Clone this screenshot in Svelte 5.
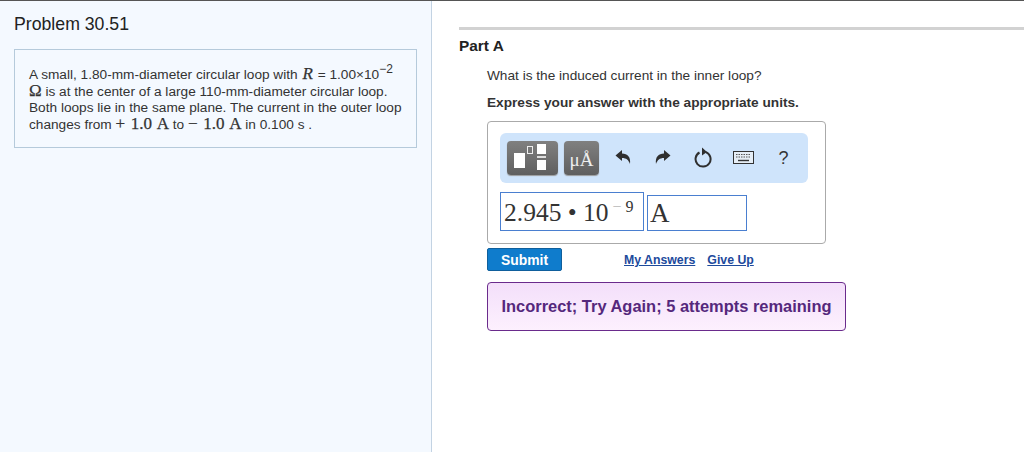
<script>
const tools = ["undo", "redo", "reset", "keyboard", "help"];
</script>

<main>
    <section class="left">
        <h1>Problem 30.51</h1>
        <div class="intro">
            A small, 1.80-mm-diameter circular loop with <i class="m r">R</i> = 1.00×10<sup>−2</sup><br />
            <span class="m">Ω</span> is at the center of a large 110-mm-diameter circular loop.<br />
            Both loops lie in the same plane. The current in the outer loop<br />
            changes from <span class="m">+ 1.0 A</span> to <span class="m">− 1.0 A</span> in 0.100 s .
        </div>
    </section>

    <section class="right">
        <hr />
        <h2>Part A</h2>
        <div class="part">
            <p class="question">What is the induced current in the inner loop?</p>
            <p class="express">Express your answer with the appropriate units.</p>

            <div class="answer">
                <div class="toolbar">
                    <div class="tpl frac">
                        <svg width="51" height="34" viewBox="0 0 51 34">
                            <rect x="7" y="12" width="11" height="15" fill="#fff" />
                            <rect x="20.5" y="5.5" width="5" height="7" fill="none" stroke="#eee" />
                            <rect x="30" y="3" width="9" height="10" fill="#fff" />
                            <rect x="30" y="15" width="9" height="2" fill="#ddd" />
                            <rect x="30" y="19" width="9" height="10" fill="#fff" />
                        </svg>
                    </div>
                    <div class="tpl units">μÅ</div>
                    <div class="icons">
                        {#each tools as t}
                            <span class="tool">
                                {#if t === "undo"}
                                    <svg width="16" height="16" viewBox="0 0 16 16"><path d="M0.5 6.5 L7 1 V4.5 C12.5 4.5 16 8 15 15 C13.5 11 11.5 9 7 9 V12 Z" fill="#2f2f2f" /></svg>
                                {:else if t === "redo"}
                                    <svg width="16" height="16" viewBox="0 0 16 16"><path d="M15.5 6.5 L9 1 V4.5 C3.5 4.5 0 8 1 15 C2.5 11 4.5 9 9 9 V12 Z" fill="#2f2f2f" /></svg>
                                {:else if t === "reset"}
                                    <svg width="18" height="21" viewBox="0 0 18 21"><path d="M5.5 5.5 A7.5 7.5 0 1 0 12 5.2" fill="none" stroke="#2f2f2f" stroke-width="2" /><path d="M8 0.5 L13 5 L8 8.5 Z" fill="#2f2f2f" /></svg>
                                {:else if t === "keyboard"}
                                    <svg width="21" height="13" viewBox="0 0 21 13">
                                        <rect x="0.5" y="0.5" width="20" height="12" fill="#e6eef6" stroke="#333" />
                                        <path d="M3 3.5H18M3 6H18" stroke="#555" stroke-width="1.2" stroke-dasharray="1.5 1" />
                                        <path d="M5 9.5H16" stroke="#333" stroke-width="1.4" />
                                    </svg>
                                {:else}
                                    <span class="help">?</span>
                                {/if}
                            </span>
                        {/each}
                    </div>
                </div>
                <div class="inputs">
                    <div class="field value">2.945 • 10<span class="exp"><span class="minus">−</span> 9</span></div>
                    <div class="field unit">A</div>
                </div>
            </div>

            <div class="actions">
                <button>Submit</button>
                <div class="links">
                    <a href="#answers">My Answers</a>
                    <a href="#giveup">Give Up</a>
                </div>
            </div>

            <div class="feedback">Incorrect; Try Again; 5 attempts remaining</div>
        </div>
    </section>
</main>

<style>
:global(body) {
    margin: 0;
}

main {
    display: flex;
    width: 1024px;
    height: 452px;
    box-sizing: border-box;
    border-top: 1px solid #555;
    font-family: "Liberation Sans", Arial, sans-serif;
    color: #333;
    background: #fff;
    overflow: hidden;
}

.left {
    width: 432px;
    box-sizing: border-box;
    padding: 13px 14px 0;
    background: #f4f9ff;
    border-right: 1px solid #c3d3e3;
}

h1 {
    margin: 0;
    font-size: 17.7px;
    font-weight: normal;
    line-height: 20px;
    color: #222;
}

.intro {
    width: 403px;
    height: 99px;
    box-sizing: border-box;
    margin-top: 15px;
    padding: 17px 14px 0;
    border: 1px solid #b5cadb;
    font-size: 13.67px;
    line-height: 16.7px;
}

.m {
    font-family: "Liberation Serif", serif;
    font-size: 17px;
    line-height: 0;
    word-spacing: 1.4px;
    -webkit-text-stroke: 0.25px;
}

.r {
    margin: 0 1px;
}

sup {
    font-size: 12px;
    line-height: 0;
}

.right {
    flex: 1;
    padding: 26px 0 0 27px;
}

hr {
    height: 3px;
    margin: 0;
    border: 0;
    background: #d2d2d2;
}

h2 {
    margin: 7px 0 0;
    font-size: 15.4px;
    line-height: 17px;
    color: #222;
}

.part {
    padding-left: 28px;
}

.question {
    margin: 13px 0 0;
    font-size: 13.65px;
    line-height: 17px;
}

.express {
    margin: 10px 0 0;
    font-size: 13.66px;
    font-weight: bold;
    line-height: 17px;
}

.answer {
    width: 339px;
    height: 123px;
    box-sizing: border-box;
    margin-top: 10px;
    padding: 11px 17px 0 12px;
    border: 1px solid #aaa;
    border-radius: 4px;
}

.toolbar {
    display: flex;
    align-items: center;
    height: 50px;
    padding-left: 7px;
    background: #cfe4fb;
    border-radius: 6px;
}

.tpl {
    height: 34px;
    border-radius: 4px;
    background: linear-gradient(#808080, #5f5f5f);
    box-shadow: 0 1px 1px #999;
}

.frac {
    width: 51px;
}

.units {
    width: 35px;
    margin-left: 6px;
    color: #eee;
    font-family: "Liberation Serif", serif;
    font-size: 19px;
    line-height: 37px;
    text-align: center;
}

.icons {
    display: flex;
    align-items: center;
    margin-left: 4px;
    margin-top: -2px;
}

.tool {
    display: flex;
    justify-content: center;
    width: 40px;
}

.help {
    padding: 2px 0 0 1px;
    font-size: 18px;
    color: #333;
}

.inputs {
    display: flex;
    align-items: flex-end;
    gap: 3px;
    margin-top: 9px;
}

.field {
    box-sizing: border-box;
    border: 1px solid #4a7fd0;
    font-family: "Liberation Serif", serif;
    font-size: 25.5px;
    color: #333;
    padding-left: 3px;
}

.value {
    width: 144px;
    height: 39px;
    line-height: 40px;
    white-space: nowrap;
}

.unit {
    width: 100px;
    height: 36px;
    padding-left: 2px;
    font-size: 27px;
    line-height: 35px;
}

.exp {
    position: relative;
    top: -9px;
    margin-left: 4px;
    font-size: 16px;
}

.minus {
    color: #bbb;
}

.actions {
    display: flex;
    align-items: center;
    margin-top: 4px;
}

button {
    width: 75px;
    height: 23px;
    padding: 0;
    border: 1px solid #0f5f9c;
    border-radius: 2px;
    background: #0f7ccc;
    color: #fff;
    font: bold 13.9px "Liberation Sans", Arial, sans-serif;
}

.links {
    display: flex;
    gap: 12px;
    margin: 1px 0 0 62px;
}

a {
    color: #1d4a9c;
    font-size: 12.3px;
    font-weight: bold;
}

.feedback {
    width: 359px;
    height: 49px;
    box-sizing: border-box;
    margin-top: 11px;
    border: 1px solid #6a2b8c;
    border-radius: 4px;
    background: linear-gradient(#f3dffa, #fdf0fe);
    color: #55287c;
    font-size: 16.45px;
    font-weight: bold;
    line-height: 47px;
    text-align: center;
}
</style>
